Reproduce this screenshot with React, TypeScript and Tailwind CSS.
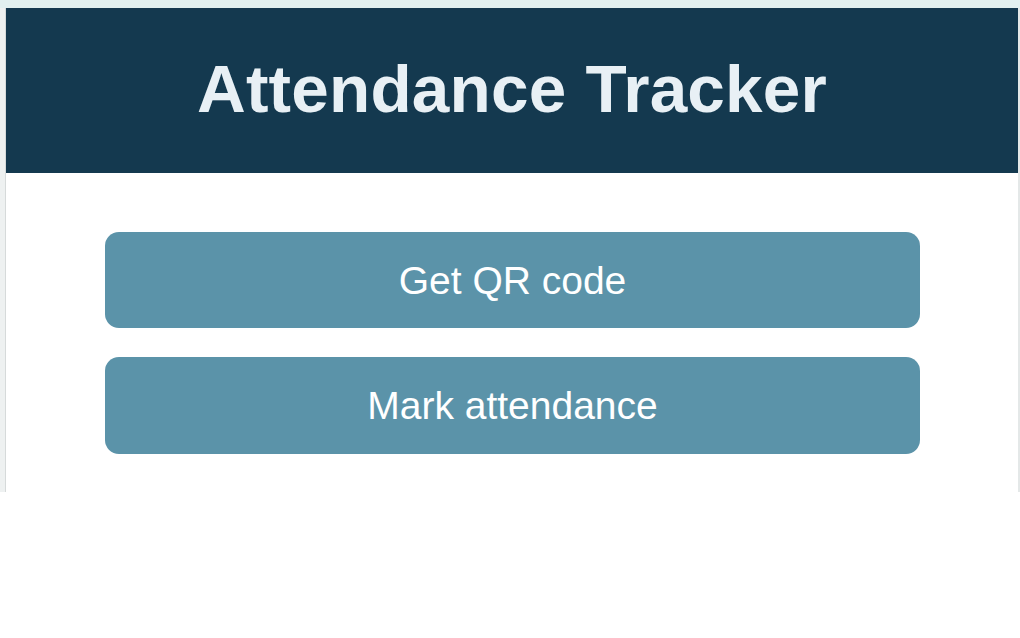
export default function App() {
  return (
    <div className="w-[1020px] h-[638px] bg-white flex flex-col" style={{ fontFamily: '"Liberation Sans", Arial, sans-serif' }}>
      <div className="h-[8px] bg-[#e2f0f0] shrink-0" />
      <div className="flex h-[484px] shrink-0">
        <div className="w-[6px] bg-[#eef1f1] border-r border-[#d6dada]" />
        <div className="flex-1 flex flex-col">
          <div className="h-[165px] bg-[#14394f] flex items-center justify-center">
            <h1 className="text-[67.5px] font-bold text-[#e8f0f5] leading-none tracking-[0.2px] -mt-[3px]">Attendance Tracker</h1>
          </div>
          <div className="flex flex-col gap-[29px] pt-[59px] pl-[99px] pr-[98px]">
            <button className="h-[96px] rounded-[14px] bg-[#5b93a9] text-white text-[39px] leading-none">Get QR code</button>
            <button className="h-[97px] rounded-[14px] bg-[#5b93a9] text-white text-[39px] leading-none">Mark attendance</button>
          </div>
        </div>
        <div className="w-[2px] bg-[#e4e8e8]" />
      </div>
      <div className="flex-1 bg-white" />
    </div>
  );
}
